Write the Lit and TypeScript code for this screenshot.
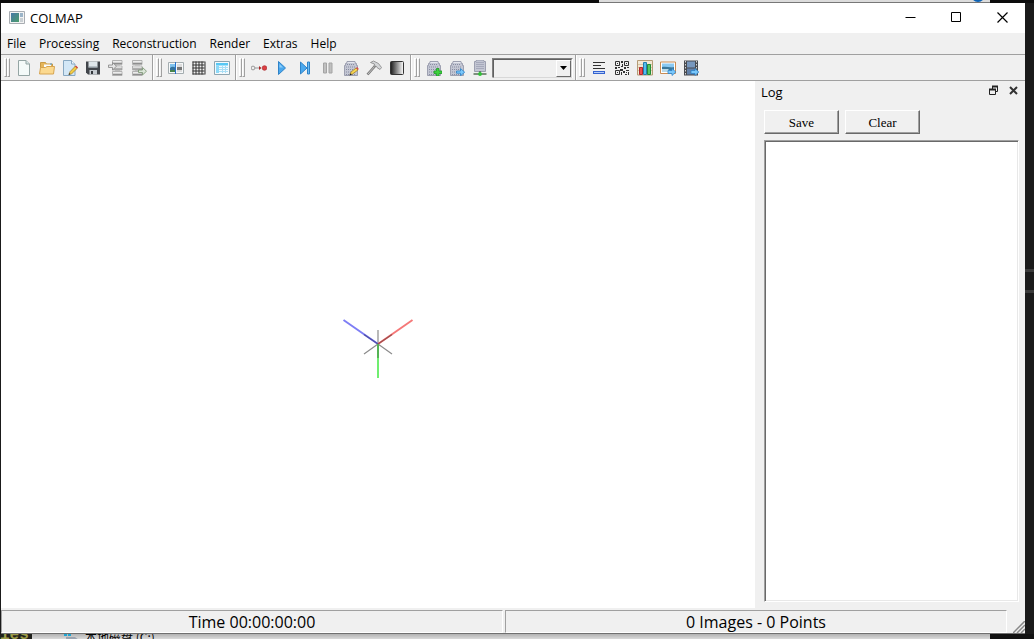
import { LitElement, html, css, svg, TemplateResult } from "lit";
import { customElement, property } from "lit/decorators.js";

const database = svg`
  <path d="M4 1.500h8l.5 2h1v2h1v10h-13v-10h1v-2h1z" fill="#c3c6d3" stroke="#8d91a3" stroke-width=".8"/>
  <path d="M4 4.500h8M3 7h10M3 9.500h10M3 12h10M3 14.500h10" stroke="#888da2" stroke-dasharray="1 1"/>
  <path d="M4.500 2.500h7" stroke="#e4e6ee"/>`;

const servers = svg`
  <path d="M4.500.5h9.500v4H4.500zM4.500 6h9.500v4H4.500zM4.500 11.500h9.500v4H4.500z" fill="#cfcfcf" stroke="#a6a6a6" stroke-width=".8"/>
  <path d="M5 3.500h9M5 9h9M5 14.500h9" stroke="#8e8e8e"/>
  <path d="M5 1.500h8.500M5 7h8.500M5 12.500h8.500" stroke="#ececec"/>
  <path d="M7 5h5M7 10.700h5" stroke="#b5b5b5"/>`;

const icons: Record<string, TemplateResult> = {
  new: svg`<path d="M2.500.500h7.500l3.500 3.500v11.500h-11z" fill="#f4faf9" stroke="#94a5a4"/>
    <path d="M10 .5v3.500h3.500" fill="#d5e5e5" stroke="#94a5a4"/>`,
  open: svg`<path d="M1.500 13V2.500h5l1 1.500h6v3" fill="#e5b55a" stroke="#c99a45"/>
    <path d="M5 4.500h7v3H5z" fill="#f8fbff"/><path d="M11 4h2" stroke="#4a9be0"/>
    <path d="M.5 14 1.500 7.500h5L8 6.500h7.500L14.500 14z" fill="#fbd98f" stroke="#d6a450"/>`,
  edit: svg`<path d="M1.500.5h8l3.500 3.500v11.500H1.500z" fill="#d3e7f6" stroke="#88a8c2"/>
    <path d="M9.500.5V4H13" fill="#f1f8fd" stroke="#88a8c2"/>
    <path d="m7 14.500 1-2.800L13.500 6 15.500 8l-5.700 5.700z" fill="#f4cd43" stroke="#9b7b29" stroke-width=".7"/>
    <path d="m13 6.500 1-1L16 7.500l-1 1z" fill="#cf4545"/><path d="m6.500 15 .8-2 1.200 1.200z" fill="#333"/>`,
  save: svg`<path d="M1 1.500h14v13H3l-2-2z" fill="#42464b"/><path d="M3.500 1.500h9v6h-9z" fill="#dfe6ea"/>
    <path d="M3.500 7h9" stroke="#8f9aa2"/><path d="M4.500 10h7.500v4.500H4.500z" fill="#c5cbd0"/><path d="M6 11h2v3H6z" fill="#33373b"/>`,
  import: svg`${servers}<path d="M.5 5h4V2.500l4 3.700-4 3.800V7.500h-4z" fill="#e6e6e6" stroke="#858585" stroke-width=".8"/>`,
  export: svg`<g transform="translate(-3 0)">${servers}</g><path d="M7.500 10h4V7.500l4 3.700-4 3.800v-2.500h-4z" fill="#dbe6d9" stroke="#76906f" stroke-width=".8"/>`,
  features: svg`<path d="M.5 2.500h15v11H.5z" fill="#f6f8f9" stroke="#a4adb0"/><path d="M2 4h6v4H2z" fill="#80c2ed"/>
    <path d="M2 8c2-2 4-1 6 0v4H2z" fill="#35729c"/><path d="M2 10h6v2H2z" fill="#48854c"/><path d="M9 4h5v8H9z" fill="#ddd"/><path d="M9 7h5v3H9z" fill="#777"/>
    <path d="M7.500 2v12" stroke="#2871cc"/>`,
  grid: svg`<path d="M2 2.500h12M2 5.500h12M2 8.500h12M2 11.500h12M2 14.500h12M2.500 2v13M5.500 2v13M8.500 2v13M11.500 2v13M14.500 2v13" transform="translate(-.5 -.5)" stroke="#303030"/>`,
  table: svg`<path d="M.5 1.500h15v13H.5z" fill="#f4fafd" stroke="#8fa5b0"/><path d="M2 3h12v2.500H2z" fill="#58c8f4"/><path d="M2 5.500h3V13H2z" fill="#8bd9f8"/>
    <path d="M5 7.500h9M5 9.500h9M5 11.500h9M8.500 6v7M11.500 6v7" stroke="#a8def5"/>`,
  step: svg`<path d="M4 8h4" stroke="#999"/><circle cx="2" cy="8" r="1.900" fill="#eee" stroke="#999"/>
    <path d="m8 6 2.500 2L8 10z" fill="#a22"/><circle cx="13.500" cy="8" r="2.300" fill="#dd3e42" stroke="#a92a2e" stroke-width=".7"/>`,
  play: svg`<path d="M4.500 1.500 11.500 8l-7 6.500z" fill="#4aa8ee" stroke="#2f83c8"/><path d="m5.500 4 3.500 3.500H5.500z" fill="#8fd0fb"/>`,
  next: svg`<path d="M3.500 2 10 8l-6.500 6z" fill="#4aa8ee" stroke="#2f83c8"/><path d="M10.500 2h2v12h-2z" fill="#6cbcf3" stroke="#2f83c8"/>`,
  pause: svg`<path d="M3.500 3h3v10h-3zM9 3h3v10H9z" fill="#c0c0c0" stroke="#a4a4a4"/>`,
  reconEdit: svg`${database}<path d="m7 14.500 1-2.500 5-4 2 2-5.500 4z" fill="#f8d750" stroke="#967628" stroke-width=".7"/><path d="m12.800 8 1.500-1 1.500 2-1 1z" fill="#d45050"/><path d="m6.500 15.500.7-2L9 14.500z" fill="#222"/>`,
  hammer: svg`<path d="m1.500 14.500 8-9" stroke="#7a7a7a" stroke-width="2.600"/><path d="m2 14 7-8" stroke="#c4c4c4"/>
    <path d="m4.500 2.500 3-1.500 5 2.500 3 4-1.500 2-3-2-1-1.500-2 .5L8.500 4z" fill="#d4d6d8" stroke="#858585" stroke-width=".8"/>`,
  render: svg`<defs><linearGradient id="shade"><stop stop-color="#181818"/><stop offset="1" stop-color="#fff"/></linearGradient></defs><rect x="1.500" y="1.500" width="13" height="13" rx="1" fill="url(#shade)" stroke="#333"/>`,
  add: svg`${database}<path d="M10.500 8.500h2.500v2.500H16v2.500h-3V16h-2.500v-2.500H8V11h2.500z" fill="#3ed23e" stroke="#1f9a26" stroke-width=".8"/>`,
  forward: svg`${database}<path d="M7.500 11h4V8.500l4.200 3.700-4.200 3.500v-2.500h-4z" fill="#7ac8fb" stroke="#2f83c8" stroke-width=".8"/>`,
  network: svg`<path d="M4.500 0h7l.5 1.500h1.500V11.500h-11V1.500H4z" fill="#c3c6d3" stroke="#8d91a3" stroke-width=".8"/><path d="M4.500 2.500h8M4.500 4.500h8M4.500 6.500h8M4.500 8.500h8" stroke="#888da2" stroke-dasharray="1 1"/>
    <path d="M8 11v3M1.500 14h13" stroke="#577058" stroke-width="1.500"/><circle cx="8" cy="14" r="1.900" fill="#2fc436"/>`,
  log: svg`<path d="M2 2.500h12M2 5.500h8M2 8.500h12" stroke="#333"/><path d="M2 11h12v3H2z" fill="#3463d0"/><path d="M3 12.500h10" stroke="#b7cef9"/>`,
  matches: svg`<path d="M1.500 1.500h4v4h-4zM10.500 1.500h4v4h-4zM1.500 10.500h4v4h-4z" fill="none" stroke="#333"/>
    <path d="M3 3h1v1H3zM12 3h1v1h-1zM3 12h1v1H3zM7 1h2v2H7zM8 4h1v3H7V6h1zM1 7h2v2H1zM4 7h2v1H4zM6 9h3v2H6zM10 7h2v2h-2zM13 7h2v1h-2zM7 12h1v3H7zM9 11h2v2H9zM12 10h3v1h-3zM11 14h2v1h-2zM14 12h1v3h-1zM12 12h1v1h-1z" fill="#333"/>`,
  chart: svg`<path d="M.5.5h15v14.500H.5z" fill="#f2e8d5" stroke="#b49b76"/><path d="M1 4.500h14M1 7.500h14M1 10.500h14" stroke="#dac7a7"/>
    <path d="M2.500 7.500h3v7h-3z" fill="#e94f4f" stroke="#b2282c"/><path d="M6.500 2.500h3v12h-3z" fill="#54bdee" stroke="#227eb0"/><path d="M10.500 4.500h3v10h-3z" fill="#50c960" stroke="#238c35"/>`,
  image: svg`<path d="M.5 2h15v11.500H.5z" fill="#fff" stroke="#ca8c52"/><path d="M2 3.500h12v4H2z" fill="#8ac9f2"/><path d="M2 7c4-1 8 1 12 0v5H2z" fill="#3a789c"/><path d="M2 9h6l3 3H2z" fill="#b9d9e8"/>
    <path d="M8 10.500h4v-2l3.800 3.500-3.800 3.500v-2H8z" fill="#7ac8fb" stroke="#2f83c8" stroke-width=".8"/>`,
  film: svg`<path d="M1 .5h14v15H1z" fill="#484b50"/><path d="M4 1.500h8v6H4z" fill="#7797bd"/><path d="M4 8.500h8v6H4z" fill="#6280a8"/>
    <path d="M2.500 1v14M13.500 1v14" stroke="#d5d5d5" stroke-dasharray="1.500 1.500"/><path d="M8 10.500h4v-2l3.800 3.500-3.800 3.500v-2H8z" fill="#7ac8fb" stroke="#2f83c8" stroke-width=".8"/>`,
};

@customElement("tool-button")
export class ToolButton extends LitElement {
  @property() icon = "";
  @property() label = "";

  static styles = css`
    :host { display: block; }
    .button { display: grid; place-items: center; width: 23px; height: 24px; padding: 0; border: 0; background: none; }
    .icon { width: 16px; height: 16px; display: block; }
  `;

  render() {
    return html`<button class="button" aria-label=${this.label} title=${this.label}>
      <svg class="icon" viewBox="0 0 16 16" fill="none">${icons[this.icon]}</svg>
    </button>`;
  }
}

const groups: [string, string][][] = [
  [["new", "New project"], ["open", "Open project"], ["edit", "Edit project"], ["save", "Save project"], ["import", "Import model"], ["export", "Export model"]],
  [["features", "Feature extraction"], ["grid", "Feature matching"], ["table", "Database management"]],
  [["step", "Automatic reconstruction"], ["play", "Start reconstruction"], ["next", "Reconstruct next image"], ["pause", "Pause reconstruction"], ["reconEdit", "Reconstruction options"], ["hammer", "Bundle adjustment"], ["render", "Dense reconstruction"]],
  [["add", "Render enabled"], ["forward", "Render now"], ["network", "Render options"]],
  [["log", "Show log"], ["matches", "Match matrix"], ["chart", "Model statistics"], ["image", "Grab image"], ["film", "Grab movie"]],
];

@customElement("app-root")
export class AppRoot extends LitElement {
  static styles = css`
    :host {
      display: block;
      height: 100vh;
      font-family: "Open Sans", "Noto Sans", sans-serif;
      font-size: 12px;
      color: #000;
    }
    * { box-sizing: border-box; }
    button { font: inherit; color: inherit; }
    .desktop {
      display: grid;
      grid-template: 3px minmax(0, 1fr) 5px / 1px minmax(0, 1fr) 9px;
      height: 100%;
      background: #1a1a1a;
      overflow: hidden;
    }
    .behind-top { grid-area: 1 / 1 / 2 / 4; display: flex; background: #0c0c0c; }
    .behind-panel { margin: 0 44px 0 auto; width: 391px; background: #dcdcdc; border-bottom: 1px solid #777; display: flex; justify-content: flex-end; padding-right: 5px; overflow: hidden; }
    .badge { width: 14px; height: 14px; margin-top: -12px; border-radius: 50%; background: #0b62b5; flex: none; }
    .behind-side { grid-area: 2 / 3; display: flex; flex-direction: column; justify-content: center; gap: 18px; background: #1a1a1a; padding-bottom: 76px; }
    .rule { height: 3px; background: #3a3a3a; }
    .behind-bottom { grid-area: 3 / 1 / 4 / 4; display: flex; overflow: hidden; }
    .editor { width: 32px; background: #20211c; color: #9c9c48; font: bold 16px/16px "Liberation Mono", monospace; overflow: hidden; }
    .editor-text { display: block; margin-top: -7px; }
    .explorer { flex: 1; display: flex; gap: 6px; padding-left: 32px; background: linear-gradient(#b2b2b2, #dadada); overflow: hidden; font: 12px/16px "Noto Sans CJK SC", sans-serif; }
    .drive { width: 15px; height: 8px; flex: none; }
    .drive-name { margin-top: -5px; }
    .code { width: 44px; background: #111; }

    .window { grid-area: 2 / 2; display: flex; flex-direction: column; background: #f0f0f0; border-bottom: 1px solid #707070; min-width: 0; }
    .titlebar { display: flex; align-items: center; height: 30px; background: #fff; flex: none; }
    .app-icon { width: 16px; height: 16px; margin: 0 5px 0 8px; }
    .title { margin: 0; font-size: 13px; font-weight: 400; line-height: 16px; flex: 1; }
    .window-button { display: grid; place-items: center; width: 46px; height: 30px; border: 0; padding: 0 0 2px; background: none; }
    .glyph { display: block; width: 11px; height: 11px; }

    .menubar { display: flex; gap: 13px; align-items: center; height: 21px; padding: 0 6px; flex: none; }
    .menu { border: 0; padding: 0; background: none; line-height: 18px; }

    .toolbar { display: flex; height: 27px; padding-left: 1px; border-top: 1px solid #a0a0a0; border-bottom: 1px solid #a0a0a0; flex: none; }
    .group { display: flex; align-items: center; padding: 0 4px 0 2px; box-shadow: inset -1px 0 #fff, inset -2px 0 #a0a0a0; }
    .group:last-child { box-shadow: none; }
    .handle { display: flex; justify-content: space-between; width: 6px; height: 19px; margin-right: 2px; }
    .handle::before, .handle::after { content: ""; width: 3px; border: 1px solid; border-color: #fff #a0a0a0 #a0a0a0 #fff; background: #f0f0f0; }
    .combo { display: grid; width: 81px; height: 20px; margin: 0 0 0 1px; border: 1px solid; border-color: #808080 #fff #fff #808080; }
    .select { grid-area: 1 / 1; appearance: none; width: 100%; height: 100%; padding: 0 18px 0 4px; border: 1px solid; border-color: #606060 #d8d8d8 #d8d8d8 #606060; border-radius: 0; background: #f0f0f0; font: inherit; }
    .drop { grid-area: 1 / 1; justify-self: end; margin: 1px; width: 15px; display: grid; place-items: center; background: #f0f0f0; border: 1px solid; border-color: #fff #696969 #696969 #fff; pointer-events: none; }
    .arrow { width: 7px; height: 4px; display: block; }

    .workspace { display: grid; grid-template-columns: minmax(0, 1fr) 270px; flex: 1; min-height: 0; }
    .viewer { display: grid; place-items: center; background: #fff; overflow: hidden; }
    .axes { width: 74px; height: 74px; display: block; }
    .dock { display: flex; flex-direction: column; min-height: 0; padding: 0 6px 6px; }
    .dock-header { display: flex; align-items: center; height: 22px; flex: none; }
    .dock-title { margin: 0; flex: 1; font-size: 13px; font-weight: 400; line-height: 16px; }
    .dock-button { border: 0; background: none; padding: 0 0 4px; margin-left: 9px; }
    .actions { display: flex; gap: 6px; padding: 7px 3px 6px; flex: none; }
    .action { width: 75px; height: 24px; padding: 1px 0 0; border: 1px solid; border-color: #fff #696969 #696969 #fff; box-shadow: inset -1px -1px #a0a0a0; background: #f0f0f0; font: 13px/16px "Liberation Serif", serif; }
    .log { flex: 1; min-height: 0; margin: 0 0 0 3px; padding: 4px; resize: none; border: 1px solid; border-color: #a0a0a0 #fff #fff #a0a0a0; box-shadow: inset 1px 1px #696969, inset -1px -1px #e8e8e8; border-radius: 0; background: #fff; font: inherit; }

    .statusbar { display: flex; gap: 2px; height: 25px; padding-top: 2px; flex: none; }
    .status { flex: 1; display: grid; place-items: center; border: 1px solid; border-color: #a0a0a0 #fff #fff #a0a0a0; font-size: 16px; line-height: 20px; }
    .grip { width: 16px; align-self: end; display: flex; justify-content: flex-end; }
    .grip-lines { width: 12px; height: 12px; display: block; }
  `;

  render() {
    return html`
      <div class="desktop">
        <div class="behind-top"><div class="behind-panel"><span class="badge"></span></div></div>
        <div class="behind-side"><div class="rule"></div><div class="rule"></div></div>
        <div class="behind-bottom">
          <div class="editor"><span class="editor-text">ies</span></div>
          <div class="explorer">
            <svg class="drive" viewBox="0 0 15 8"><path d="M0 0h3v2H0zM4 0h3v2H4z" fill="#20a4d0"/><path d="M2 3h9l4 3v2H2z" fill="#9ba4b0"/></svg>
            <span class="drive-name">本地磁盘 (C:)</span>
          </div>
          <div class="code"></div>
        </div>

        <main class="window">
          <header class="titlebar">
            <svg class="app-icon" viewBox="0 0 16 16">
              <defs><linearGradient id="app" x2="1" y2="1"><stop stop-color="#4779a8"/><stop offset="1" stop-color="#4b9c6b"/></linearGradient></defs>
              <path d="M.5 1.500h15v12H.5z" fill="#f3f3f3" stroke="#a8adb2"/><path d="M2 3h8v9H2z" fill="url(#app)"/><path d="M11 3h3v4h-3z" fill="#9bb4c8"/><path d="M11 8h3v4h-3z" fill="#c9cfd3"/>
            </svg>
            <h1 class="title">COLMAP</h1>
            <button class="window-button" aria-label="Minimize"><svg class="glyph" viewBox="0 0 11 11"><path d="M.5 5.500h10" stroke="#000"/></svg></button>
            <button class="window-button" aria-label="Maximize"><svg class="glyph" viewBox="0 0 11 11"><path d="M.5.5h9v9h-9z" fill="none" stroke="#000"/></svg></button>
            <button class="window-button" aria-label="Close"><svg class="glyph" viewBox="0 0 11 11"><path d="m.5.5 10 10M10.500.5l-10 10" stroke="#000" stroke-width="1.200"/></svg></button>
          </header>

          <nav class="menubar" aria-label="Main menu">
            ${["File", "Processing", "Reconstruction", "Render", "Extras", "Help"].map((m) => html`<button class="menu">${m}</button>`)}
          </nav>

          <div class="toolbar" role="toolbar">
            ${groups.map((group, i) => html`
              <div class="group">
                <span class="handle"></span>
                ${group.map(([icon, label]) => html`<tool-button icon=${icon} label=${label}></tool-button>`)}
                ${i === 3 ? html`<div class="combo">
                  <select class="select" aria-label="Model"><option></option></select>
                  <span class="drop"><svg class="arrow" viewBox="0 0 7 4"><path d="M0 0h7L3.500 4z"/></svg></span>
                </div>` : ""}
              </div>`)}
          </div>

          <div class="workspace">
            <section class="viewer" aria-label="Model viewer">
              <svg class="axes" viewBox="0 1 74 74" fill="none">
                <path d="M37 23v14M37 37 23 47M37 37l14 10" stroke="#8c8c8c" stroke-width="1.200"/>
                <path d="M37 37 2.500 13" stroke="#7d7df5" stroke-width="2"/>
                <path d="M37 37 71.500 13" stroke="#f57878" stroke-width="2"/>
                <path d="M37 37v34" stroke="#70ee70" stroke-width="2"/>
                <path d="M37 37 23 27.500" stroke="#5050a8" stroke-width="1.500"/>
                <path d="m37 37 14-9.500" stroke="#a04e4e" stroke-width="1.500"/>
                <path d="M37 37v14" stroke="#4da04d" stroke-width="1.500"/>
              </svg>
            </section>
            <aside class="dock">
              <div class="dock-header">
                <h2 class="dock-title" id="log-title">Log</h2>
                <button class="dock-button" aria-label="Float"><svg class="glyph" viewBox="0 0 11 11"><path d="M4.500 4V1.500h5v5H8M1.500 4.500h6v5h-6z" fill="none" stroke="#222"/><path d="M4 1.500h6M1 4.500h7" stroke="#222" stroke-width="2"/></svg></button>
                <button class="dock-button" aria-label="Close log"><svg class="glyph" viewBox="0 0 11 11"><path d="m2 2 7 7M9 2 2 9" stroke="#333" stroke-width="2"/></svg></button>
              </div>
              <div class="actions"><button class="action">Save</button><button class="action">Clear</button></div>
              <textarea class="log" aria-labelledby="log-title" readonly></textarea>
            </aside>
          </div>

          <footer class="statusbar">
            <div class="status">Time 00:00:00:00</div>
            <div class="status">0 Images - 0 Points</div>
            <div class="grip"><svg class="grip-lines" viewBox="0 0 12 12"><path d="M0 12 12 0M4 12l8-8M8 12l4-4" stroke="#888" stroke-width="1.500"/></svg></div>
          </footer>
        </main>
      </div>
    `;
  }
}
